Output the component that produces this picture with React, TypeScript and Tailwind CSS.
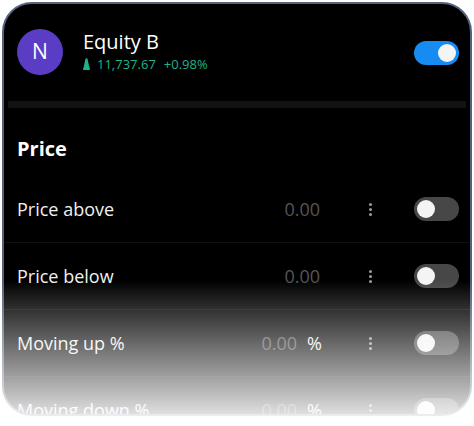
import React from "react";

type AlertRow = {
  label: string;
  value: string;
  percent?: boolean;
};

const ROWS: AlertRow[] = [
  { label: "Price above", value: "0.00" },
  { label: "Price below", value: "0.00" },
  { label: "Moving up %", value: "0.00", percent: true },
  { label: "Moving down %", value: "0.00", percent: true },
];

function Toggle({ on }: { on: boolean }) {
  return (
    <div
      className={`flex h-[24px] w-[45px] shrink-0 items-center rounded-full px-[3px] ${
        on ? "justify-end bg-[#168cf2]" : "justify-start bg-[#474747]"
      }`}
    >
      <div className="h-[18px] w-[18px] rounded-full bg-[#f4f4f4]" />
    </div>
  );
}

function MoreDots() {
  return (
    <div className="flex w-[10px] shrink-0 flex-col items-center gap-[2px]">
      <span className="h-[3px] w-[3px] rounded-full bg-[#9a9a9a]" />
      <span className="h-[3px] w-[3px] rounded-full bg-[#9a9a9a]" />
      <span className="h-[3px] w-[3px] rounded-full bg-[#9a9a9a]" />
    </div>
  );
}

export default function App() {
  return (
    <div
      className="relative h-[426px] w-[474px] overflow-hidden bg-white"
      style={{ fontFamily: '"Open Sans", "Noto Sans", sans-serif' }}
    >
      <div className="mx-[2px] mt-[2px] h-[414px] overflow-hidden rounded-[30px] border-2 border-[#56637c] bg-black">
        {/* header */}
        <div className="flex h-[97px] items-start pl-[13px] pr-[11px] pt-[25px]">
          <div className="flex h-[46px] w-[46px] shrink-0 items-center justify-center rounded-full bg-[#5a3dc4] text-[21px] text-white">
            N
          </div>
          <div className="ml-[20px] flex flex-1 flex-col">
            <div className="text-[20px] leading-[26px] text-white">Equity B</div>
            <div className="flex items-center text-[13px] leading-[18px] text-[#1fb38b]">
              <svg width="7" height="12" viewBox="0 0 7 12" className="mr-[7px]">
                <path d="M2.6 0.6 Q3.5 -0.2 4.4 0.6 L7 12 L0 12 Z" fill="#1fb38b" />
              </svg>
              <span>11,737.67</span>
              <span className="ml-[8px]">+0.98%</span>
            </div>
          </div>
          <div className="mt-[12px]">
            <Toggle on />
          </div>
        </div>

        <div className="mx-[4px] h-[7px] bg-[#121212]" />

        {/* section */}
        <div className="px-[13px] pb-[13px] pt-[27px] text-[20px] font-bold leading-[28px] text-white">
          Price
        </div>

        {ROWS.map((row) => (
          <div
            key={row.label}
            className="flex h-[67px] items-center border-b border-[#101010] pl-[13px] pr-[11px]"
          >
            <div className="flex-1 text-[18px] text-[#f0f0f0]">{row.label}</div>
            <div
              className={`flex w-[80px] items-center justify-end text-[18px] ${
                row.percent ? "-mr-[2px]" : "pr-[2px]"
              }`}
            >
              <span className="text-[#555555]">{row.value}</span>
              {row.percent && <span className="ml-[10px] text-[#f0f0f0]">%</span>}
            </div>
            <div className={row.percent ? "ml-[45px]" : "ml-[43px]"}>
              <MoreDots />
            </div>
            <div className="ml-[39px]">
              <Toggle on={false} />
            </div>
          </div>
        ))}
      </div>

      {/* bottom fade */}
      <div className="pointer-events-none absolute inset-x-0 bottom-0 h-[146px] bg-linear-to-b from-white/0 to-white/95" />
    </div>
  );
}
